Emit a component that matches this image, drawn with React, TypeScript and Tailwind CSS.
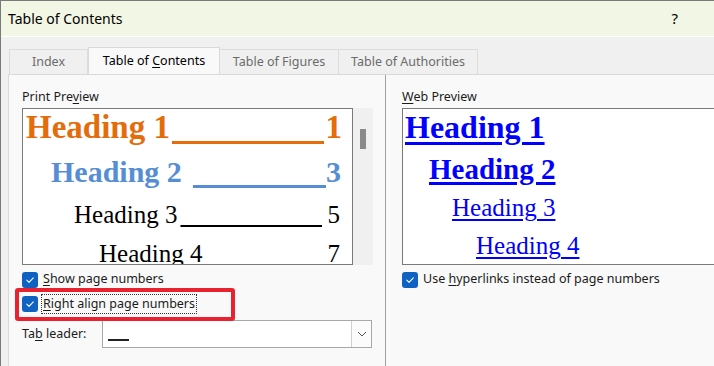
import React from "react";

const ui = { fontFamily: '"Segoe UI", "Noto Sans", sans-serif' };
const serif = { fontFamily: '"Liberation Serif", "Times New Roman", serif' };

const blank = "\u00a0".repeat(80);

function Check() {
  return (
    <span className="flex h-[16px] w-[16px] shrink-0 items-center justify-center rounded-[3px] bg-[#0f62c1]">
      <svg width="10" height="10" viewBox="0 0 10 10" fill="none">
        <path d="M1.8 5.2 L4 7.3 L8.3 2.8" stroke="white" strokeWidth="1.1" strokeLinecap="round" strokeLinejoin="round" />
      </svg>
    </span>
  );
}

function Tab({ label, active, w }: { label: React.ReactNode; active?: boolean; w: string }) {
  return (
    <div
      className={
        active
          ? `${w} -mb-px h-[27px] border border-b-0 border-[#d9d9d9] bg-[#f9f9f9] text-center leading-[26px] text-black`
          : `${w} mt-[2px] h-[25px] border border-l-0 border-b-0 border-[#dcdcdc] bg-[#f0f0f0] text-center leading-[24px] text-[#6b6b6b] first:border-l`
      }
    >
      {label}
    </div>
  );
}

export default function App() {
  return (
    <div style={ui} className="relative h-[366px] w-[714px] overflow-hidden border-l border-t border-[#7a7a7a] bg-[#f0f0f0] text-[12.5px] text-[#1b1b1b]">
      <div className="flex h-[36px] items-center justify-between border-b border-white bg-[#f2f6e4] pl-[7px] pr-[36px] text-[14px] text-black">
        <span>Table of Contents</span>
        <span className="text-[15px]">?</span>
      </div>

      <div className="ml-[8px] flex pt-[10px]">
        <Tab w="w-[79px]" label="Index" />
        <Tab w="w-[132px]" active label={<>Table of <u className="underline-offset-2">C</u>ontents</>} />
        <Tab w="w-[119px]" label="Table of Figures" />
        <Tab w="w-[139px]" label="Table of Authorities" />
      </div>

      <div className="ml-[7px] flex h-[293px] border border-r-0 border-[#d9d9d9] bg-[#f9f9f9]">
        {/* left column */}
        <div className="w-[377px] shrink-0 border-r border-[#a0a0a0] pl-[13px] pt-[13px]">
          <div className="h-[20px] leading-[18px]">Print Pre<u className="underline-offset-2">v</u>iew</div>
          <div className="flex">
            <div style={serif} className="h-[157px] w-[331px] overflow-hidden border border-[#7a7a7a] bg-white">
              <div className="flex h-[36px] items-baseline pl-[3px] pr-[10px] text-[33px] font-bold leading-[36px] text-[#e46c0a]">
                <span className="whitespace-nowrap">Heading 1</span>
                <span className="ml-[2px] min-w-0 flex-1 overflow-hidden whitespace-nowrap text-[20px] underline decoration-[3px] underline-offset-[3px]">{blank}</span>
                <span className="ml-[2px]">1</span>
              </div>
              <div className="flex h-[54px] items-baseline pl-[28px] pr-[11px] text-[30px] font-bold leading-[54px] text-[#558ed5]">
                <span className="whitespace-nowrap">Heading 2</span>
                <span className="ml-[11px] min-w-0 flex-1 overflow-hidden whitespace-nowrap text-[20px] underline decoration-[3px] underline-offset-[3px]">{blank}</span>
                <span>3</span>
              </div>
              <div className="flex h-[31px] items-baseline pl-[51px] pr-[12px] text-[25px] leading-[31px] text-black">
                <span className="whitespace-nowrap">Heading 3</span>
                <span className="ml-[3px] min-w-0 flex-1 overflow-hidden whitespace-nowrap text-[20px] underline decoration-[1.5px] underline-offset-[2px]">{blank}</span>
                <span className="ml-[6px]">5</span>
              </div>
              <div className="flex h-[47px] items-baseline justify-between pl-[76px] pr-[12px] text-[25px] leading-[47px] text-black">
                <span className="whitespace-nowrap">Heading 4</span>
                <span>7</span>
              </div>
            </div>
            <div className="relative h-[157px] w-[20px] bg-[#f0f0f0]">
              <div className="absolute left-[7px] top-[21px] h-[20px] w-[6px] bg-[#8a8a8a]" />
            </div>
          </div>

          <div className="mt-[6px] flex h-[17px] items-center gap-[5px]">
            <Check />
            <span><u className="underline-offset-2">S</u>how page numbers</span>
          </div>
          <div className="relative mt-[7px] flex h-[17px] items-center gap-[3px]">
            <Check />
            <span className="border border-dotted border-[#333] px-[1px] leading-[18px]"><u className="underline-offset-2">R</u>ight align page numbers</span>
            <div className="absolute left-[-7px] top-[-7px] h-[33px] w-[220px] rounded-[3px] border-[4px] border-[#e8232f]" />
          </div>
          <div className="mt-[8px] flex h-[28px] items-center">
            <span className="w-[80px]">Ta<u className="underline-offset-2">b</u> leader:</span>
            <div className="flex h-[28px] w-[270px] border border-[#a8a8a8] bg-white">
              <div className="flex-1 pl-[5px] pt-[18px]">
                <div className="h-[1.5px] w-[21px] bg-[#222]" />
              </div>
              <div className="flex w-[20px] items-center justify-center border-l border-[#cfcfcf] bg-[#fbfbfb]">
                <svg width="10" height="6" viewBox="0 0 10 6" fill="none">
                  <path d="M1 1 L5 5 L9 1" stroke="#555" strokeWidth="1" />
                </svg>
              </div>
            </div>
          </div>
        </div>

        {/* right column */}
        <div className="flex-1 pl-[16px] pt-[13px]">
          <div className="h-[20px] leading-[18px]"><u className="underline-offset-2">W</u>eb Preview</div>
          <div style={serif} className="h-[157px] overflow-hidden border border-r-0 border-[#7a7a7a] bg-white text-[#0000ff]">
            <div className="h-[36px] pl-[2px] text-[32px] font-bold leading-[36px]">
              <span className="underline decoration-[3px] underline-offset-[4px]">Heading 1</span>
            </div>
            <div className="h-[48px] pl-[26px] text-[29px] font-bold leading-[48px]">
              <span className="underline decoration-[3px] underline-offset-[3px]">Heading 2</span>
            </div>
            <div className="h-[29px] pl-[49px] text-[25px] leading-[29px]">
              <span className="underline decoration-[1.5px] underline-offset-[3px]">Heading 3</span>
            </div>
            <div className="h-[47px] pl-[73px] text-[25px] leading-[47px]">
              <span className="underline decoration-[1.5px] underline-offset-[3px]">Heading 4</span>
            </div>
          </div>
          <div className="mt-[6px] flex h-[17px] items-center gap-[5px]">
            <Check />
            <span>Use <u className="underline-offset-2">h</u>yperlinks instead of page numbers</span>
          </div>
        </div>
      </div>
    </div>
  );
}
